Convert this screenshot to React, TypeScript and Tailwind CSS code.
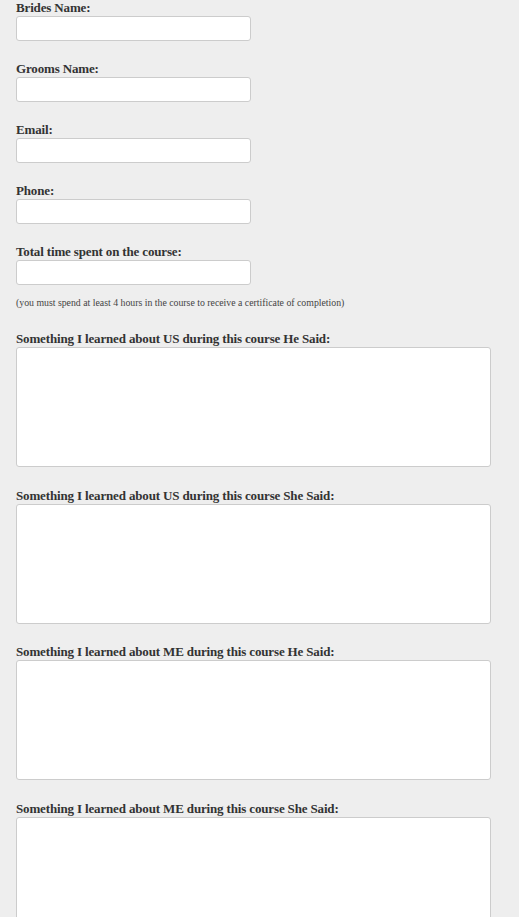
const shortFields = ["Brides Name:", "Grooms Name:", "Email:", "Phone:"];

const longFields = [
  "Something I learned about US during this course He Said:",
  "Something I learned about US during this course She Said:",
  "Something I learned about ME during this course He Said:",
  "Something I learned about ME during this course She Said:",
];

function Label({ text }: { text: string }) {
  return (
    <label className="block h-4 text-[13px] leading-4 font-bold text-[#333333] tracking-[-0.15px]">
      {text}
    </label>
  );
}

export default function App() {
  return (
    <div className="min-h-[917px] bg-[#eeeeee] px-4 font-['Liberation_Serif',serif]">
      {shortFields.map((f) => (
        <div key={f} className="mb-5">
          <Label text={f} />
          <input
            type="text"
            className="block w-[235px] h-[25px] bg-white border border-[#cccccc] rounded-[3px] outline-none"
          />
        </div>
      ))}

      <div>
        <Label text="Total time spent on the course:" />
        <input
          type="text"
          className="block w-[235px] h-[25px] bg-white border border-[#cccccc] rounded-[3px] outline-none"
        />
      </div>
      <p className="mt-3 h-3 text-[9.8px] leading-3 text-[#444444]">
        (you must spend at least 4 hours in the course to receive a certificate of completion)
      </p>

      <div className="mt-[22px]">
        {longFields.map((f) => (
          <div key={f} className="mb-[20.5px]">
            <Label text={f} />
            <textarea className="block w-[475px] h-[120px] bg-white border border-[#cccccc] rounded-[3px] outline-none resize-none" />
          </div>
        ))}
      </div>
    </div>
  );
}
